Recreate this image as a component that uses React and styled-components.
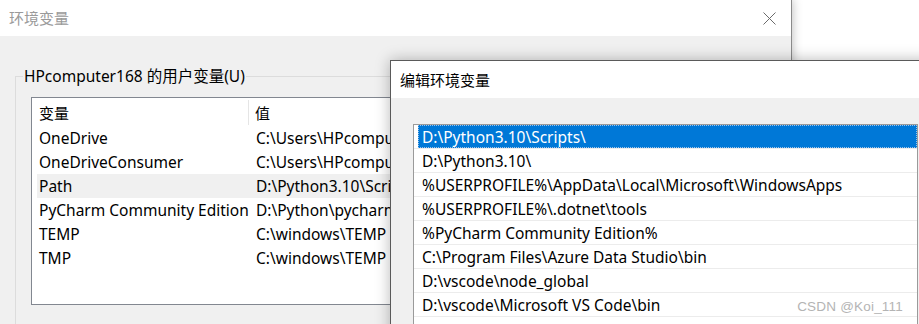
import React from "react";
import styled, { createGlobalStyle } from "styled-components";

const Global = createGlobalStyle`
  html, body { margin: 0; padding: 0; background: #ffffff; overflow: hidden; }
  #root { width: 919px; height: 324px; }
`;

const FONT = `"Segoe UI", "Noto Sans", "Noto Sans CJK SC", sans-serif`;

const Desktop = styled.div`
  position: relative;
  width: 919px;
  height: 324px;
  overflow: hidden;
  background: #ffffff;
  font-family: ${FONT};
  font-size: 15.5px;
  color: #000;
`;

const Window = styled.div`
  position: absolute;
  left: ${(p) => p.$left}px;
  top: ${(p) => p.$top}px;
  width: ${(p) => p.$width}px;
  height: ${(p) => p.$height}px;
  display: flex;
  flex-direction: column;
  background: #f0f0f0;
  border: 1px solid ${(p) => p.$border};
  box-shadow: 0 0 ${(p) => p.$shadow}px rgba(0, 0, 0, 0.28);
  box-sizing: border-box;
`;

const TitleBar = styled.div`
  height: ${(p) => p.$height}px;
  flex: none;
  display: flex;
  align-items: center;
  justify-content: space-between;
  background: #ffffff;
  padding-left: ${(p) => p.$pad}px;
  padding-right: 14px;
  box-sizing: border-box;
`;

const Title = styled.span`
  font-family: "Noto Sans CJK SC", sans-serif;
  font-size: 15px;
  color: ${(p) => (p.$inactive ? "#9a9a9a" : "#000000")};
  line-height: 20px;
`;

const CloseButton = styled.div`
  width: 14px;
  height: 14px;
  display: flex;
  align-items: center;
  justify-content: center;
  margin-right: ${(p) => p.$offset}px;
`;

const Body = styled.div`
  flex: 1;
  padding: ${(p) => p.$pad};
`;

const GroupBox = styled.fieldset`
  margin: 0;
  padding: 0 0 0 7px;
  border: 1px solid #dcdcdc;
  border-right: none;
  border-bottom: none;
  min-width: 0;
  height: 260px;
`;

const Legend = styled.legend`
  padding: 0 1px;
  font-size: 15.5px;
  line-height: 20px;
  font-family: ${FONT};
`;

const ListView = styled.div`
  margin-left: 8px;
  margin-top: 11px;
  width: 480px;
  height: 208px;
  box-sizing: border-box;
  background: #ffffff;
  border: 1px solid #828790;
  overflow: hidden;
`;

const HeaderRow = styled.div`
  display: grid;
  grid-template-columns: 217px 1fr;
  height: 28px;
  align-items: center;
`;

const HeaderCell = styled.div`
  display: flex;
  align-items: center;
  height: 25px;
  padding-left: ${(p) => p.$pad}px;
  border-right: ${(p) => (p.$divider ? "1px solid #e5e5e5" : "none")};
  box-sizing: border-box;
  font-family: "Noto Sans CJK SC", sans-serif;
  font-size: 15px;
`;

const Row = styled.div`
  display: grid;
  grid-template-columns: 217px 1fr;
  height: 24px;
  align-items: center;
  margin-left: 5px;
  background: ${(p) => (p.$hover ? "#f0f0f0" : "transparent")};
  white-space: nowrap;
`;

const Cell = styled.div`
  padding-left: ${(p) => p.$pad}px;
  line-height: 24px;
  overflow: hidden;
`;

const PathList = styled.div`
  width: 505px;
  height: 240px;
  box-sizing: border-box;
  background: #ffffff;
  border: 1px solid #9a9a9a;
  display: flex;
  flex-direction: column;
`;

const PathItem = styled.div`
  height: 24px;
  flex: none;
  box-sizing: border-box;
  border-bottom: 1px solid #ececec;
  display: flex;
  align-items: stretch;
`;

const PathText = styled.div`
  flex: 1;
  margin-left: 4px;
  padding-left: 4px;
  display: flex;
  align-items: center;
  white-space: nowrap;
  background: ${(p) => (p.$selected ? "#0078d7" : "transparent")};
  color: ${(p) => (p.$selected ? "#ffffff" : "#000000")};
  outline: ${(p) => (p.$selected ? "1px dotted #9cc3ea" : "none")};
  outline-offset: -1px;
`;

const Watermark = styled.div`
  position: absolute;
  right: 16px;
  top: 299px;
  font-family: "Liberation Sans", Arial, sans-serif;
  font-size: 13.5px;
  color: #b4b4b4;
  letter-spacing: 0.2px;
`;

const CloseIcon = () => (
  <svg width="13" height="13" viewBox="0 0 13 13">
    <path d="M0.5 0.5 L12.5 12.5 M12.5 0.5 L0.5 12.5" stroke="#6b6b6b" strokeWidth="1" fill="none" />
  </svg>
);

const userVars = [
  ["OneDrive", "C:\\Users\\HPcomputer168\\OneDrive"],
  ["OneDriveConsumer", "C:\\Users\\HPcomputer168\\OneDrive"],
  ["Path", "D:\\Python3.10\\Scripts\\;D:\\Python3.10\\"],
  ["PyCharm Community Edition", "D:\\Python\\pycharm\\bin;"],
  ["TEMP", "C:\\windows\\TEMP"],
  ["TMP", "C:\\windows\\TEMP"],
];

const paths = [
  "D:\\Python3.10\\Scripts\\",
  "D:\\Python3.10\\",
  "%USERPROFILE%\\AppData\\Local\\Microsoft\\WindowsApps",
  "%USERPROFILE%\\.dotnet\\tools",
  "%PyCharm Community Edition%",
  "C:\\Program Files\\Azure Data Studio\\bin",
  "D:\\vscode\\node_global",
  "D:\\vscode\\Microsoft VS Code\\bin",
  "",
];

export default function App() {
  return (
    <>
      <Global />
      <Desktop>
        <Window $left={-1} $top={-1} $width={793} $height={420} $border="#8a8a8a" $shadow={10}>
          <TitleBar $height={36} $pad={9}>
            <Title $inactive>环境变量</Title>
            <CloseButton $offset={1}>
              <CloseIcon />
            </CloseButton>
          </TitleBar>
          <Body $pad="30px 0 0 15px">
            <GroupBox>
              <Legend>HPcomputer168 的用户变量(U)</Legend>
              <ListView>
                <HeaderRow>
                  <HeaderCell $pad={7} $divider>变量</HeaderCell>
                  <HeaderCell $pad={6}>值</HeaderCell>
                </HeaderRow>
                {userVars.map(([k, v]) => (
                  <Row key={k} $hover={k === "Path"}>
                    <Cell $pad={2}>{k}</Cell>
                    <Cell $pad={2}>{v}</Cell>
                  </Row>
                ))}
              </ListView>
            </GroupBox>
          </Body>
        </Window>

        <Window $left={390} $top={60} $width={560} $height={300} $border="#5a5a5a" $shadow={14}>
          <TitleBar $height={37} $pad={9}>
            <Title>编辑环境变量</Title>
          </TitleBar>
          <Body $pad="26px 0 0 22px">
            <PathList>
              {paths.map((p, i) => (
                <PathItem key={i}>
                  <PathText $selected={i === 0}>{p}</PathText>
                </PathItem>
              ))}
            </PathList>
          </Body>
        </Window>

        <Watermark>CSDN @Koi_111</Watermark>
      </Desktop>
    </>
  );
}
